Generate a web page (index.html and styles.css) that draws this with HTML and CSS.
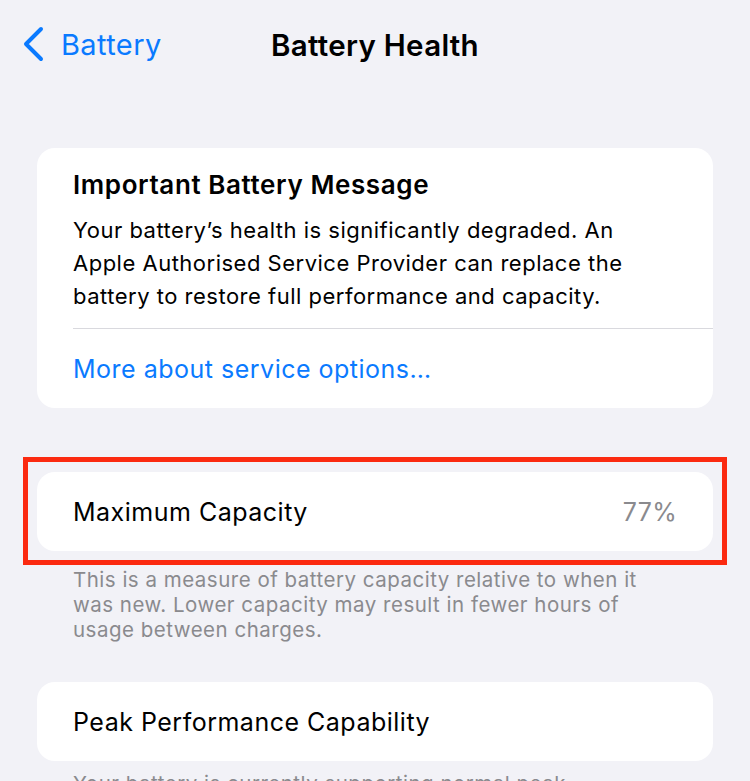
FILE: index.html
```html
<!DOCTYPE html>
<html>
<head>
<meta charset="utf-8">
<link rel="stylesheet" href="styles.css">
</head>
<body>
<div class="nav">
  <div class="back">
    <svg class="chev" width="22" height="36" viewBox="0 0 22 36"><polyline points="18,3 3,18 18,33" fill="none" stroke="#0a7aff" stroke-width="4" stroke-linecap="round" stroke-linejoin="round"/></svg>
    <span class="back-label">Battery</span>
  </div>
  <div class="title">Battery Health</div>
</div>

<div class="card msg">
  <div class="msg-title">Important Battery Message</div>
  <div class="msg-body">Your battery’s health is significantly degraded. An Apple Authorised Service Provider can replace the battery to restore full performance and capacity.</div>
  <div class="sep"></div>
  <div class="link">More about service options…</div>
</div>

<div class="highlight">
  <div class="card row">
    <span class="row-label">Maximum Capacity</span>
    <span class="row-value">77%</span>
  </div>
</div>
<div class="footnote">This is a measure of battery capacity relative to when it was new. Lower capacity may result in fewer hours of usage between charges.</div>

<div class="card row peak">
  <span class="row-label">Peak Performance Capability</span>
</div>
<div class="footnote">Your battery is currently supporting normal peak performance.</div>
</body>
</html>
```
FILE: styles.css
```css
html, body {
  margin: 0;
  padding: 0;
  background: #f2f2f7;
  font-family: Inter, "Noto Sans", sans-serif;
  color: #000;
  overflow: hidden;
  height: 781px;
}
.nav {
  position: relative;
  height: 90px;
  display: flex;
  align-items: center;
  justify-content: center;
}
.back {
  position: absolute;
  left: 23px;
  top: 26px;
  display: flex;
  align-items: center;
  gap: 16px;
}
.back-label {
  color: #0a7aff;
  font-size: 29px;
  letter-spacing: 0.4px;
}
.title {
  font-size: 29.5px;
  font-weight: 600;
  letter-spacing: 0.3px;
  margin-top: -1px;
}
.card {
  background: #fff;
  border-radius: 18px;
  margin: 0 37px;
}
.msg {
  margin-top: 58px;
  padding: 20px 0 0 36px;
  height: 240px;
}
.msg-title {
  font-size: 26px;
  font-weight: 600;
  letter-spacing: 0.6px;
  line-height: 34px;
}
.msg-body {
  font-size: 22px;
  line-height: 33px;
  padding-right: 30px;
  margin-top: 12px;
  letter-spacing: 0.5px;
}
.sep {
  height: 1px;
  background: #d9d9de;
  margin-top: 15px;
}
.link {
  color: #0a7aff;
  font-size: 25px;
  line-height: 30px;
  margin-top: 25px;
  letter-spacing: 0.5px;
}
.highlight {
  margin: 49px 23px 0;
  border: 5px solid #fb2a10;
  padding: 10px 9px 9px;
}
.highlight .card {
  margin: 0;
}
.row {
  height: 79px;
  display: flex;
  align-items: center;
  justify-content: space-between;
  padding: 0 36px;
}
.row-label {
  font-size: 25px;
  letter-spacing: 0.5px;
}
.row-value {
  font-size: 25px;
  color: #8a8a8e;
  letter-spacing: 0.3px;
}
.footnote {
  margin: 2px 37px 0;
  padding: 0 36px;
  font-size: 20.5px;
  line-height: 25px;
  color: #8a8a8e;
  letter-spacing: 0.5px;
}
.peak {
  margin-top: 40px;
}
.peak + .footnote {
  margin-top: 10px;
}
```
